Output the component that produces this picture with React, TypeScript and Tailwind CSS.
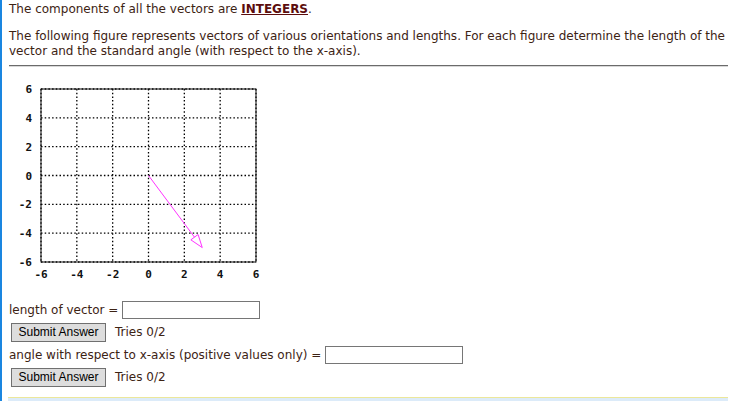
import React from 'react';

const xs = [-6, -4, -2, 0, 2, 4, 6];
const ys = [6, 4, 2, 0, -2, -4, -6];

// plot box in svg coords
const left = 32;
const right = 247;
const top = 10;
const bottom = 183;
const sx = (v: number) => left + ((v + 6) / 12) * (right - left);
const sy = (v: number) => top + ((6 - v) / 12) * (bottom - top);

const VectorPlot: React.FC = () => {
  const x0 = sx(0);
  const y0 = sy(0);
  const x1 = sx(3);
  const y1 = sy(-5);
  const dx = x1 - x0;
  const dy = y1 - y0;
  const len = Math.hypot(dx, dy);
  const ux = dx / len;
  const uy = dy / len;
  const bx = x1 - ux * 13;
  const by = y1 - uy * 13;
  const px = -uy * 4.5;
  const py = ux * 4.5;

  return (
    <svg width="265" height="205" className="block">
      {xs.map((v) => (
        <line key={'gx' + v} x1={sx(v)} y1={top} x2={sx(v)} y2={bottom} stroke="#000" strokeWidth="1.3" strokeDasharray="1.5 2.2" />
      ))}
      {ys.map((v) => (
        <line key={'gy' + v} x1={left} y1={sy(v)} x2={right} y2={sy(v)} stroke="#000" strokeWidth="1.3" strokeDasharray="1.5 2.2" />
      ))}
      <rect x={left} y={top} width={right - left} height={bottom - top} fill="none" stroke="#111" strokeWidth="1" />
      {ys.map((v) => (
        <text key={'ly' + v} x={23} y={sy(v) + 4} textAnchor="end" fontSize="11" fontWeight="bold" fill="#111" fontFamily="'DejaVu Sans Mono', monospace">
          {v}
        </text>
      ))}
      {xs.map((v) => (
        <text key={'lx' + v} x={sx(v)} y={199} textAnchor="middle" fontSize="11" fontWeight="bold" fill="#111" fontFamily="'DejaVu Sans Mono', monospace">
          {v}
        </text>
      ))}
      <line x1={x0} y1={y0} x2={bx} y2={by} stroke="#ff33ff" strokeWidth="1" />
      <polygon points={`${x1},${y1} ${bx + px},${by + py} ${bx - px},${by - py}`} fill="none" stroke="#ff33ff" strokeWidth="1" />
    </svg>
  );
};

const AnswerRow: React.FC<{ label: string; inputW: string }> = ({ label, inputW }) => (
  <>
    <div className="flex h-[18px] items-center">
      <span>{label}&nbsp;</span>
      <input type="text" className={`h-[18px] ${inputW} border border-[#767676] bg-white px-1 outline-none`} />
    </div>
    <div className="mt-[4px] flex h-[19px] items-center">
      <button className="ml-[2px] h-[19px] w-[95px] border border-[#707070] bg-[#dddddd] font-['Liberation_Sans',Arial,sans-serif] text-[12px] text-black">
        Submit Answer
      </button>
      <span className="ml-[9px]">Tries 0/2</span>
    </div>
  </>
);

export default function App() {
  return (
    <div className="min-h-screen border-l-2 border-[#1a86e0] bg-white pl-[7px] pr-[7px] font-['DejaVu_Sans',Verdana,sans-serif] text-[12px] leading-[15px] text-[#3d2314]">
      <p className="pt-[2px]">
        The components of all the vectors are{' '}
        <span className="font-bold text-[#5c0d0d] underline">INTEGERS</span>.
      </p>
      <p className="mt-[12px]">
        The following figure represents vectors of various orientations and lengths. For each figure determine the length of the
        vector and the standard angle (with respect to the x-axis).
      </p>
      <div className="mt-[6px] h-[2px] border-t border-[#6b6b6b] bg-[#d8d8d8]" />
      <div className="mt-[12px]">
        <VectorPlot />
      </div>
      <div className="mt-[17px]">
        <AnswerRow label="length of vector =" inputW="w-[138px]" />
        <div className="mt-[4px]">
          <AnswerRow label="angle with respect to x-axis (positive values only) =" inputW="w-[138px]" />
        </div>
      </div>
      <div className="ml-[-1px] mt-[10px] h-[20px] border-t border-[#ece79a] bg-[#dcebf9]" />
    </div>
  );
}
